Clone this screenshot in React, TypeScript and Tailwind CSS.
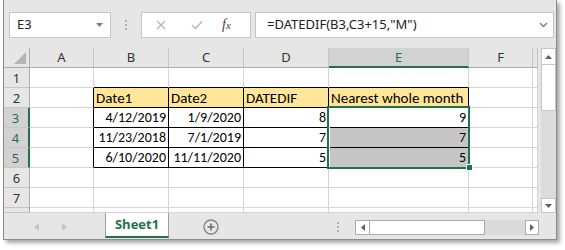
import React from 'react';

const data: Record<number, string[]> = {
  2: ['Date1', 'Date2', 'DATEDIF', 'Nearest whole month'],
  3: ['4/12/2019', '1/9/2020', '8', '9'],
  4: ['11/23/2018', '7/1/2019', '7', '7'],
  5: ['6/10/2020', '11/11/2020', '5', '5'],
};

const letters = ['A', 'B', 'C', 'D', 'E', 'F', ''];

function Grid() {
  const cells: React.ReactNode[] = [];
  cells.push(
    <div key="corner" className="relative bg-[#e6e6e6] border-r border-b border-r-[#ababab] border-b-[#ababab]">
      <svg className="absolute left-[10px] top-[4px]" width="13" height="13" viewBox="0 0 13 13">
        <polygon points="0,12 12,12 12,0" fill="#b5b5b5" />
      </svg>
    </div>
  );
  letters.forEach((l, i) => {
    const sel = l === 'E';
    cells.push(
      <div
        key={'h' + i}
        className={
          sel
            ? 'flex items-center justify-center bg-[#d2d2d2] border-r border-r-[#c6c6c6] border-b-2 border-b-[#217346] text-[#217346] pt-[1px]'
            : 'flex items-center justify-center bg-[#e6e6e6] border-r border-r-[#c6c6c6] border-b border-b-[#ababab] text-[#333]'
        }
      >
        {l}
      </div>
    );
  });
  for (let r = 1; r <= 8; r++) {
    const selRow = r >= 3 && r <= 5;
    cells.push(
      <div
        key={'r' + r}
        className={
          selRow
            ? 'flex items-center justify-center bg-[#d2d2d2] border-r-2 border-r-[#217346] border-b border-b-[#c6c6c6] text-[#217346] pt-[2px] pr-[1px]'
            : 'flex items-center justify-center bg-[#e6e6e6] border-r border-r-[#ababab] border-b border-b-[#c6c6c6] text-[#333] pt-[2px]'
        }
      >
        {r <= 7 ? r : ''}
      </div>
    );
    for (let c = 1; c <= 7; c++) {
      const rightBlack = c >= 1 && c <= 5 && r >= 2 && r <= 5;
      const bottomBlack = r >= 1 && r <= 5 && c >= 2 && c <= 5;
      let bg = 'bg-white';
      if (r === 2 && c >= 2 && c <= 5) bg = 'bg-[#ffe699]';
      if (c === 5 && (r === 4 || r === 5)) bg = 'bg-[#c6c6c6]';
      const rb = rightBlack ? 'border-r-black' : 'border-r-[#d4d4d4]';
      const bb = bottomBlack ? 'border-b-black' : 'border-b-[#d4d4d4]';
      const text = data[r] && c >= 2 && c <= 5 ? data[r][c - 2] : '';
      const align = r === 2 ? 'justify-start pl-[2px] text-[15px]' : 'justify-end pr-[2px] text-[14px]';
      cells.push(
        <div
          key={'c' + r + '-' + c}
          className={`flex items-end overflow-hidden whitespace-nowrap border-r border-b ${rb} ${bb} ${bg} ${align} pb-[1px] text-black font-['Carlito','Lato',sans-serif] leading-[16px]`}
        >
          {text}
        </div>
      );
    }
  }
  return (
    <div className="relative grid grid-cols-[26px_64px_75px_75px_85px_140px_64px_5px] grid-rows-[20px_20px_20px_20px_20px_20px_20px_20px_5px] font-['Noto_Sans',sans-serif] text-[13px]">
      {cells}
      <div className="absolute left-[323px] top-[58px] w-[143px] h-[63px] border-2 border-[#217346] pointer-events-none">
        <div className="w-full h-full border border-white border-r-0 border-b-0"></div>
      </div>
      <div className="absolute left-[462px] top-[116px] w-[7px] h-[7px] bg-[#217346] border border-white"></div>
    </div>
  );
}

function VScroll() {
  return (
    <div className="flex flex-col w-[15px] h-[165px]">
      <div className="h-[17px] bg-white border border-[#c6c6c6] flex items-center justify-center">
        <svg width="7" height="4" viewBox="0 0 7 4"><polygon points="0,4 7,4 3.5,0" fill="#606060" /></svg>
      </div>
      <div className="h-[46px] bg-white border border-[#c6c6c6] border-t-0"></div>
      <div className="flex-1 bg-[#dcdcdc]"></div>
      <div className="h-[15px] bg-white border border-[#c6c6c6] flex items-center justify-center">
        <svg width="7" height="4" viewBox="0 0 7 4"><polygon points="0,0 7,0 3.5,4" fill="#606060" /></svg>
      </div>
    </div>
  );
}

function TabBar() {
  return (
    <div className="flex h-[26px] bg-[#e6e6e6] font-['Open_Sans',sans-serif]">
      <div className="w-[101px] flex items-center pt-[1px]">
        <svg className="ml-[30px]" width="5" height="8" viewBox="0 0 5 8"><polygon points="5,0 5,8 0,4" fill="#c4c4c4" /></svg>
        <svg className="ml-[23px]" width="5" height="8" viewBox="0 0 5 8"><polygon points="0,0 0,8 5,4" fill="#c4c4c4" /></svg>
      </div>
      <div className="w-[64px] h-[25px] bg-white border-l border-r border-[#9e9e9e] border-b-2 border-b-[#217346] flex items-center justify-center text-[13px] font-bold text-[#217346] leading-none pb-[1px]">
        Sheet1
      </div>
      <div className="w-[84px] flex items-center justify-center pt-[1px]">
        <svg width="16" height="16" viewBox="0 0 16 16">
          <circle cx="8" cy="8" r="7" fill="none" stroke="#808080" strokeWidth="1.3" />
          <line x1="8" y1="4.5" x2="8" y2="11.5" stroke="#707070" strokeWidth="1.6" />
          <line x1="4.5" y1="8" x2="11.5" y2="8" stroke="#707070" strokeWidth="1.6" />
        </svg>
      </div>
      <div className="w-[87px] flex flex-col items-end justify-center gap-[2px] pr-[1px] pt-[1px]">
        <div className="w-[2px] h-[2px] bg-[#b0b0b0]"></div>
        <div className="w-[2px] h-[2px] bg-[#b0b0b0]"></div>
        <div className="w-[2px] h-[2px] bg-[#b0b0b0]"></div>
      </div>
      <div className="ml-[15px] mt-[7px] flex h-[15px]">
        <div className="w-[15px] bg-white border border-[#ababab] flex items-center justify-center">
          <svg width="4" height="7" viewBox="0 0 4 7"><polygon points="4,0 4,7 0,3.5" fill="#606060" /></svg>
        </div>
        <div className="w-[115px] bg-white border-t border-b border-r border-[#ababab]"></div>
        <div className="w-[40px] bg-[#dadada]"></div>
        <div className="w-[14px] bg-white border border-[#ababab] flex items-center justify-center">
          <svg width="4" height="7" viewBox="0 0 4 7"><polygon points="0,0 0,7 4,3.5" fill="#606060" /></svg>
        </div>
      </div>
    </div>
  );
}

function Toolbar() {
  return (
    <div className="h-[48px] flex items-start pt-[12px] pl-[5px] font-['Noto_Sans',sans-serif]">
      <div className="w-[102px] h-[26px] bg-white border border-[#c6c6c6] flex items-center justify-between pl-[7px] pr-[7px] text-[13px] text-[#222]">
        <span>E3</span>
        <svg width="7" height="4" viewBox="0 0 7 4"><polygon points="0,0 7,0 3.5,4" fill="#808080" /></svg>
      </div>
      <div className="w-[30px] h-[26px] flex flex-col items-center justify-center gap-[2px]">
        <div className="w-[2px] h-[2px] bg-[#b0b0b0]"></div>
        <div className="w-[2px] h-[2px] bg-[#b0b0b0]"></div>
        <div className="w-[2px] h-[2px] bg-[#b0b0b0]"></div>
      </div>
      <div className="w-[110px] h-[26px] bg-white border border-[#c6c6c6] flex items-center">
        <svg className="ml-[14px]" width="10" height="10" viewBox="0 0 10 10">
          <path d="M1 1 L9 9 M9 1 L1 9" stroke="#b4b4b4" strokeWidth="1.3" />
        </svg>
        <svg className="ml-[25px]" width="12" height="10" viewBox="0 0 12 10">
          <path d="M1 5 L4.5 8.5 L11 1.5" fill="none" stroke="#b4b4b4" strokeWidth="1.4" />
        </svg>
        <span className="ml-[19px] font-['Liberation_Serif',serif] italic text-[14px] text-[#444] leading-none">
          f<span className="text-[11px]">x</span>
        </span>
      </div>
      <div className="ml-[4px] w-[299px] h-[26px] bg-white border border-[#c6c6c6] flex items-center justify-between pl-[11px] pr-[5px] text-[13px] text-[#222]">
        <span>=DATEDIF(B3,C3+15,"M")</span>
        <svg width="9" height="6" viewBox="0 0 9 6"><path d="M1 1 L4.5 4.5 L8 1" fill="none" stroke="#808080" strokeWidth="1.5" /></svg>
      </div>
    </div>
  );
}

export default function App() {
  return (
    <div className="w-[565px] h-[250px] bg-white">
      <div className="ml-[3px] w-[554px] h-[240px] bg-[#e6e6e6] border-l border-r border-b border-[#8c8c8c] shadow-[3px_3px_4px_rgba(0,0,0,0.35)] flex flex-col">
        <Toolbar />
        <div className="flex h-[165px]">
          <Grid />
          <div className="w-[3px]"></div>
          <VScroll />
        </div>
        <TabBar />
      </div>
    </div>
  );
}
